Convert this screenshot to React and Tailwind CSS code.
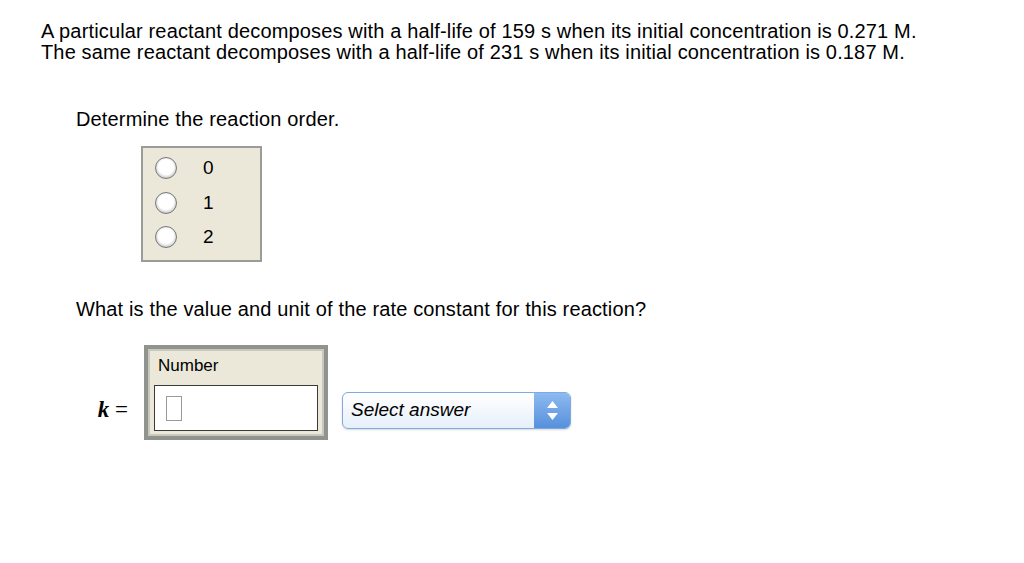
export default function App() {
  const font = { fontFamily: '"Liberation Sans", Arial, sans-serif' };
  return (
    <div className="w-[1024px] h-[563px] bg-white text-black overflow-hidden" style={font}>
      <div className="pl-[41px] pt-[21px] text-[20px] leading-[21px] tracking-[0.15px]">
        <p>A particular reactant decomposes with a half-life of 159 s when its initial concentration is 0.271 M.</p>
        <p>The same reactant decomposes with a half-life of 231 s when its initial concentration is 0.187 M.</p>
      </div>
      <div className="pl-[76px] mt-[46px] text-[20px] leading-[21px] tracking-[0.15px]">
        <p>Determine the reaction order.</p>
      </div>
      <div className="ml-[141px] mt-[16px] w-[121px] h-[116px] bg-[#ebe8d9] border-2 border-[#9b9b98] flex flex-col pl-[12px] pt-[10px] gap-[14.5px]">
        {["0", "1", "2"].map((v) => (
          <div key={v} className="flex items-center h-[20px]">
            <div className="w-[22px] h-[22px] rounded-full border border-[#7a7a7a] bg-[radial-gradient(circle_at_50%_45%,#ffffff_0%,#ffffff_50%,#d0d0d0_72%,#8a8a8a_100%)]" />
            <span className="ml-[26px] text-[19px] leading-[20px]">{v}</span>
          </div>
        ))}
      </div>
      <div className="pl-[76px] mt-[37px] text-[20px] leading-[21px] tracking-[0.15px]">
        <p>What is the value and unit of the rate constant for this reaction?</p>
      </div>
      <div className="flex items-center mt-[25px]">
        <div className="w-[144px] flex justify-end pr-[16px] pt-[35px]">
          <span className="text-[23px]" style={{ fontFamily: '"Liberation Serif", "Times New Roman", serif' }}>
            <b><i>k</i></b> =
          </span>
        </div>
        <div className="w-[184px] h-[95px] bg-[#ebe8d9] border-[4px] border-[#8f948f] shadow-[inset_0_0_0_2px_#c8c8bc] px-[6px] pt-[7px]">
          <div className="pl-[4px] text-[17px] leading-[20px]">Number</div>
          <div className="mt-[9px] h-[46px] bg-white border border-[#3a3a3a] flex items-center pl-[11px]">
            <div className="w-[16px] h-[25px] border border-[#9a9a9a] bg-white" />
          </div>
        </div>
        <div className="ml-[14px] mt-[36px] w-[229px] h-[37px] rounded-[6px] border border-[#7fa9df] bg-gradient-to-b from-white to-[#e6effa] shadow-[0_1px_2px_rgba(0,0,0,0.15)] flex overflow-hidden">
          <div className="flex-1 flex items-center pl-[8px] text-[19px] italic">Select answer</div>
          <div className="w-[36px] bg-gradient-to-b from-[#8dbaf0] to-[#5690dc] flex flex-col items-center justify-center gap-[5px]">
            <svg width="11" height="7" viewBox="0 0 11 7"><polygon points="5.5,0 11,7 0,7" fill="white" /></svg>
            <svg width="11" height="7" viewBox="0 0 11 7"><polygon points="0,0 11,0 5.5,7" fill="white" /></svg>
          </div>
        </div>
      </div>
    </div>
  );
}
